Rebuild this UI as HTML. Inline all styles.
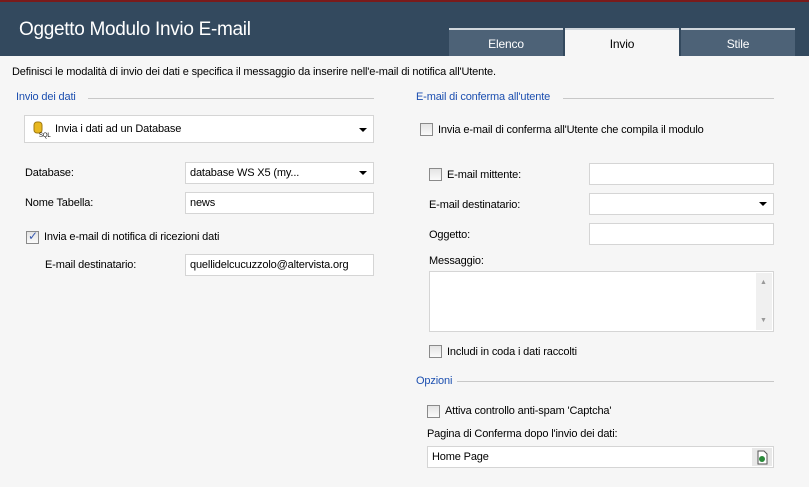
<!DOCTYPE html>
<html><head><meta charset="utf-8"><style>
*{margin:0;padding:0;box-sizing:border-box}
body{width:809px;height:487px;background:#f6f6f6;font-family:"Liberation Sans",sans-serif;font-size:11px;letter-spacing:-0.15px;color:#000;position:relative;overflow:hidden}
.a{position:absolute;white-space:nowrap}
.hd{position:absolute;left:0;top:0;width:809px;height:56px;background:#33495e;border-top:2px solid #7a1b1b}
.tab{position:absolute;top:28px;height:28px;width:114px;background:#4d6277;border-top:2px solid #d0d6dc;color:#fff;text-align:center;line-height:29px;font-size:12px}
.box{position:absolute;background:#fff;border:1px solid #d5d5d5;height:22px;line-height:20px;padding-left:4px}
.cb{position:absolute;width:13px;height:13px;border:1px solid #8a8a8a;background:linear-gradient(#e4e4e4,#fafafa)}
.sec{position:absolute;color:#1c4fb0}
.ln{position:absolute;height:1px;background:#c8c8c8}
.arr{position:absolute;right:6px;top:8px;width:0;height:0;border-left:4px solid transparent;border-right:4px solid transparent;border-top:4px solid #000}
</style></head><body>
<div class="hd"></div>
<div class="a" style="left:19px;top:19px;color:#fff;font-size:19px;letter-spacing:-0.3px">Oggetto Modulo Invio E-mail</div>
<div class="tab" style="left:449px">Elenco</div>
<div class="tab" style="left:565px;background:#f6f6f6;color:#000">Invio</div>
<div class="tab" style="left:681px">Stile</div>
<div class="a" style="left:12px;top:66px">Definisci le modalità di invio dei dati e specifica il messaggio da inserire nell'e-mail di notifica all'Utente.</div>

<div class="sec a" style="left:16px;top:91px">Invio dei dati</div><div class="ln" style="left:88px;top:98px;width:286px"></div>
<div class="box" style="left:24px;top:115px;width:350px;height:28px;line-height:26px;padding-left:30px">Invia i dati ad un Database<div class="arr" style="top:12px"></div>
<svg style="position:absolute;left:8px;top:5px" width="18" height="18"><rect x="1" y="1" width="8" height="11" rx="3" fill="#e8b820" stroke="#a07a10"/><text x="6" y="16" font-size="6" font-family="Liberation Sans">SQL</text></svg></div>
<div class="a" style="left:25px;top:167px">Database:</div>
<div class="box" style="left:185px;top:162px;width:189px">database WS X5 (my...<div class="arr"></div></div>
<div class="a" style="left:25px;top:197px">Nome Tabella:</div>
<div class="box" style="left:185px;top:192px;width:189px">news</div>
<div class="cb" style="left:26px;top:231px"><span style="position:absolute;left:1px;top:-3px;font-size:12px;color:#3b5bb0">✓</span></div>
<div class="a" style="left:44px;top:231px">Invia e-mail di notifica di ricezioni dati</div>
<div class="a" style="left:45px;top:259px">E-mail destinatario:</div>
<div class="box" style="left:185px;top:254px;width:189px">quellidelcucuzzolo@altervista.org</div>

<div class="sec a" style="left:416px;top:91px">E-mail di conferma all'utente</div><div class="ln" style="left:563px;top:98px;width:211px"></div>
<div class="cb" style="left:420px;top:123px"></div>
<div class="a" style="left:438px;top:124px">Invia e-mail di conferma all'Utente che compila il modulo</div>
<div class="cb" style="left:429px;top:168px"></div>
<div class="a" style="left:447px;top:169px">E-mail mittente:</div>
<div class="box" style="left:589px;top:163px;width:185px"></div>
<div class="a" style="left:429px;top:199px">E-mail destinatario:</div>
<div class="box" style="left:589px;top:193px;width:185px"><div class="arr"></div></div>
<div class="a" style="left:429px;top:229px">Oggetto:</div>
<div class="box" style="left:589px;top:223px;width:185px"></div>
<div class="a" style="left:429px;top:255px">Messaggio:</div>
<div class="box" style="left:429px;top:271px;width:345px;height:61px"><div style="position:absolute;right:1px;top:1px;width:16px;height:57px;background:#f0f0f0;color:#999;font-size:7px;line-height:8px"><span style="position:absolute;left:4px;top:6px">▲</span><span style="position:absolute;left:4px;top:44px">▼</span></div></div>
<div class="cb" style="left:429px;top:345px"></div>
<div class="a" style="left:447px;top:346px">Includi in coda i dati raccolti</div>
<div class="sec a" style="left:416px;top:375px">Opzioni</div><div class="ln" style="left:457px;top:381px;width:317px"></div>
<div class="cb" style="left:427px;top:405px"></div>
<div class="a" style="left:445px;top:405px">Attiva controllo anti-spam 'Captcha'</div>
<div class="a" style="left:427px;top:428px">Pagina di Conferma dopo l'invio dei dati:</div>
<div class="box" style="left:427px;top:446px;width:347px">Home Page<div style="position:absolute;right:1px;top:1px;width:20px;height:18px;background:#e8e8e8"><svg width="20" height="18"><path d="M6 3h6l3 3v10H6z" fill="#fff" stroke="#555"/><circle cx="10" cy="11" r="3" fill="#2a8a3a"/></svg></div></div>
</body></html>
